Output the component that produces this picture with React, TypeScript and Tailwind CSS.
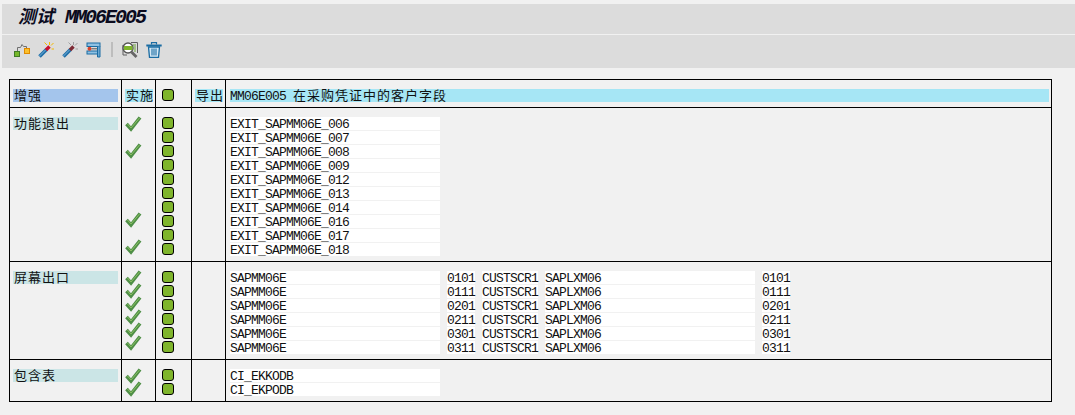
import type { ReactNode } from 'react';

const MONO = "font-['Liberation_Mono','Noto_Sans_CJK_SC',monospace]";
const ROW_COLS = 'grid grid-cols-[112px_34px_36px_34px_1fr]';

const FUNCTION_EXITS = [
  { name: 'EXIT_SAPMM06E_006', done: true },
  { name: 'EXIT_SAPMM06E_007', done: false },
  { name: 'EXIT_SAPMM06E_008', done: true },
  { name: 'EXIT_SAPMM06E_009', done: false },
  { name: 'EXIT_SAPMM06E_012', done: false },
  { name: 'EXIT_SAPMM06E_013', done: false },
  { name: 'EXIT_SAPMM06E_014', done: false },
  { name: 'EXIT_SAPMM06E_016', done: true },
  { name: 'EXIT_SAPMM06E_017', done: false },
  { name: 'EXIT_SAPMM06E_018', done: true },
];

const SCREEN_EXITS = ['0101', '0111', '0201', '0211', '0301', '0311'];
const INCLUDES = ['CI_EKKODB', 'CI_EKPODB'];

// ── small glyphs ──────────────────────────────────────────────────────────
function Led() {
  return <div className="h-[12px] w-[12px] rounded-[3px] border border-black bg-[#7fb52c]" />;
}

function Check() {
  return (
    <svg width="16" height="15" viewBox="0 0 16 15" className="-mt-px block overflow-visible">
      <path d="M1.5 8 L6 13 L15 1.5" fill="none" stroke="#4f8f47" strokeWidth="3.6" />
      <path d="M2.5 8 L6 12 L14.5 2" fill="none" stroke="#8cc063" strokeWidth="1" />
    </svg>
  );
}

function ConnectIcon() {
  return (
    <svg width="16" height="16" viewBox="0 0 16 16">
      <path d="M3.5 9 V5.5 H6.5 L8 2.5 L9.5 4.5 H12.5 V7" fill="none" stroke="#707070" strokeWidth="1" />
      <rect x="0.5" y="9.5" width="5" height="5" fill="#76b82a" stroke="#3f7a26" />
      <rect x="10.5" y="6.5" width="5" height="5" fill="#fbc02d" stroke="#e08a00" />
    </svg>
  );
}

function WandIcon({ active }: { active: boolean }) {
  const spark = active ? '#f5b800' : '#a0a0a0';
  return (
    <svg width="16" height="16" viewBox="0 0 16 16">
      <path d="M1.5 14.5 L8.5 7.5" stroke="#1f6fa8" strokeWidth="3.6" />
      <path d="M1.5 14 L8 7.5" stroke="#79b4dc" strokeWidth="1" />
      <path d="M8 8 L11.5 4.5" stroke={active ? '#c8102e' : '#7d2a35'} strokeWidth="3.4" />
      <path d="M11.5 0 V3 M15.5 1 L13 3.5 M16 7 H13.5 M6.5 0.5 L9 3" stroke={spark} strokeWidth="1" />
    </svg>
  );
}

function ClampIcon() {
  return (
    <svg width="16" height="16" viewBox="0 0 16 16">
      <rect x="1" y="1" width="13" height="3.5" fill="#8fc1e3" stroke="#1a6ca3" />
      <rect x="1" y="9" width="10.5" height="3" fill="#8fc1e3" stroke="#1a6ca3" />
      <path d="M11.5 4.5 V15 H14 V4.5" fill="#6aa6d0" stroke="#1a6ca3" />
      <circle cx="3.5" cy="6.8" r="2" fill="#d8432b" />
      <path d="M5.5 6.8 H11" stroke="#555" strokeWidth="1" />
    </svg>
  );
}

function InspectIcon() {
  return (
    <svg width="16" height="16" viewBox="0 0 16 16">
      <path d="M9 0.5 H15.5 V11 M1 3 V13 H5" fill="none" stroke="#5f5f5f" strokeWidth="1" />
      <path d="M11 3 H14 M12 5 H14 M12 7 H14 M12 9 H14" stroke="#6aa33a" strokeWidth="1" />
      <circle cx="6" cy="6" r="5" fill="#fff" stroke="#555" strokeWidth="1.4" />
      <rect x="2" y="4" width="8.5" height="4" fill="#7fb52c" />
      <path d="M9.5 10 L14.5 15" stroke="#666" strokeWidth="2.8" />
    </svg>
  );
}

function TrashIcon() {
  return (
    <svg width="16" height="16" viewBox="0 0 16 16">
      <path d="M5.5 2.5 V0.7 H10.5 V2.5" fill="none" stroke="#1a6ca3" strokeWidth="1.2" />
      <path d="M0.3 3.5 H15.7" stroke="#1a6ca3" strokeWidth="2" />
      <path d="M2.5 5 L3.5 15.3 H12.5 L13.5 5 Z" fill="#d6e9f5" stroke="#1a6ca3" strokeWidth="1.3" />
      <path d="M6 6.5 V13.5 M8 6.5 V13.5 M10 6.5 V13.5" stroke="#1a6ca3" strokeWidth="1.1" />
    </svg>
  );
}

// ── text cells ────────────────────────────────────────────────────────────
function Cjk({ children }: { children: ReactNode }) {
  return <span className="text-[13px] tracking-[1px]">{children}</span>;
}

function Field({ width, children }: { width: string; children?: ReactNode }) {
  return (
    <div className={`h-[13px] ${width} bg-white text-[13px] leading-[15px] tracking-[-0.8px] whitespace-pre text-[#111]`}>
      {children}
    </div>
  );
}

function SectionLabel({ children }: { children: ReactNode }) {
  return (
    <div className="h-[13px] w-[105px] bg-[#cbe5e6] pl-px text-[13px] leading-[15px] tracking-[1px] text-[#111]">
      {children}
    </div>
  );
}

function Section({
  label,
  checks,
  leds,
  last,
  children,
}: {
  label: string;
  checks: boolean[];
  leds: number;
  last?: boolean;
  children: ReactNode;
}) {
  return (
    <div className={`${ROW_COLS} ${last ? '' : 'border-b border-black'}`}>
      <div className="border-r border-black pt-[9px] pl-[3px]">
        <SectionLabel>{label}</SectionLabel>
      </div>
      <div className="border-r border-black pt-[9px] pl-[3px]">
        {checks.map((c, i) => (
          <div key={i} className="h-[14px]">{c && <Check />}</div>
        ))}
      </div>
      <div className="border-r border-black pt-[9px] pl-[6px]">
        {Array.from({ length: leds }).map((_, i) => (
          <div key={i} className="h-[14px]"><Led /></div>
        ))}
      </div>
      <div className="border-r border-black" />
      <div className="pt-[9px] pb-[4px] pl-[4px]">{children}</div>
    </div>
  );
}

export default function App() {
  return (
    <div className={`h-[415px] w-[1075px] overflow-hidden bg-[#f1f1f1] pt-[4px] pl-[2px] ${MONO}`}>
      {/* title */}
      <div className="flex h-[30px] items-center bg-[#dcdcdc] pb-[2px] pl-[16px]">
        <h1 className="text-[20px] leading-none font-bold tracking-[-2px] text-[#0b0b1e] italic whitespace-pre">
          <span className="pr-px text-[18px] tracking-normal">测试</span> MM06E005
        </h1>
      </div>

      {/* toolbar */}
      <div className="mt-px flex h-[33px] items-center gap-[8px] bg-[#dcdcdc] pb-[4px] pl-[12px]">
        <ConnectIcon />
        <WandIcon active />
        <WandIcon active={false} />
        <ClampIcon />
        <div className="mx-px h-[15px] w-[2px] bg-[#bdbdbd]" />
        <InspectIcon />
        <TrashIcon />
      </div>

      {/* table */}
      <div className="mt-[11px] ml-[7px] w-[1043px] border border-black">
        <div className={`${ROW_COLS} h-[28px] border-b border-black`}>
          <div className="border-r border-black pt-[9px] pl-[3px]">
            <div className="h-[13px] w-[105px] bg-[#a4c5ec] pl-px text-[13px] leading-[15px] tracking-[1px] text-[#111]">增强</div>
          </div>
          <div className="border-r border-black pt-[9px] pl-[3px]">
            <div className="h-[13px] w-[28px] bg-[#a6e6f5] pl-px text-[13px] leading-[15px] tracking-[1px] whitespace-nowrap text-[#111]">实施</div>
          </div>
          <div className="border-r border-black pt-[9px] pl-[6px]">
            <Led />
          </div>
          <div className="border-r border-black pt-[9px] pl-[3px]">
            <div className="h-[13px] w-[28px] bg-[#a6e6f5] pl-px text-[13px] leading-[15px] tracking-[1px] whitespace-nowrap text-[#111]">导出</div>
          </div>
          <div className="pt-[9px] pl-[4px]">
            <div className="h-[13px] w-[819px] bg-[#a6e6f5] text-[13px] leading-[15px] tracking-[-0.8px] whitespace-pre text-[#111]">
              MM06E005 <Cjk>在采购凭证中的客户字段</Cjk>
            </div>
          </div>
        </div>

        <Section label="功能退出" checks={FUNCTION_EXITS.map((e) => e.done)} leds={FUNCTION_EXITS.length}>
          {FUNCTION_EXITS.map((e) => (
            <div key={e.name} className="h-[14px]">
              <Field width="w-[210px]">{e.name}</Field>
            </div>
          ))}
        </Section>

        <Section label="屏幕出口" checks={SCREEN_EXITS.map(() => true)} leds={SCREEN_EXITS.length}>
          {SCREEN_EXITS.map((no) => (
            <div key={no} className="flex h-[14px] gap-[7px]">
              <Field width="w-[210px]">SAPMM06E</Field>
              <Field width="w-[28px]">{no}</Field>
              <Field width="w-[56px]">CUSTSCR1</Field>
              <Field width="w-[210px]">SAPLXM06</Field>
              <Field width="w-[28px]">{no}</Field>
            </div>
          ))}
        </Section>

        <Section label="包含表" checks={INCLUDES.map(() => true)} leds={INCLUDES.length} last>
          {INCLUDES.map((name) => (
            <div key={name} className="h-[14px]">
              <Field width="w-[210px]">{name}</Field>
            </div>
          ))}
        </Section>
      </div>
    </div>
  );
}
